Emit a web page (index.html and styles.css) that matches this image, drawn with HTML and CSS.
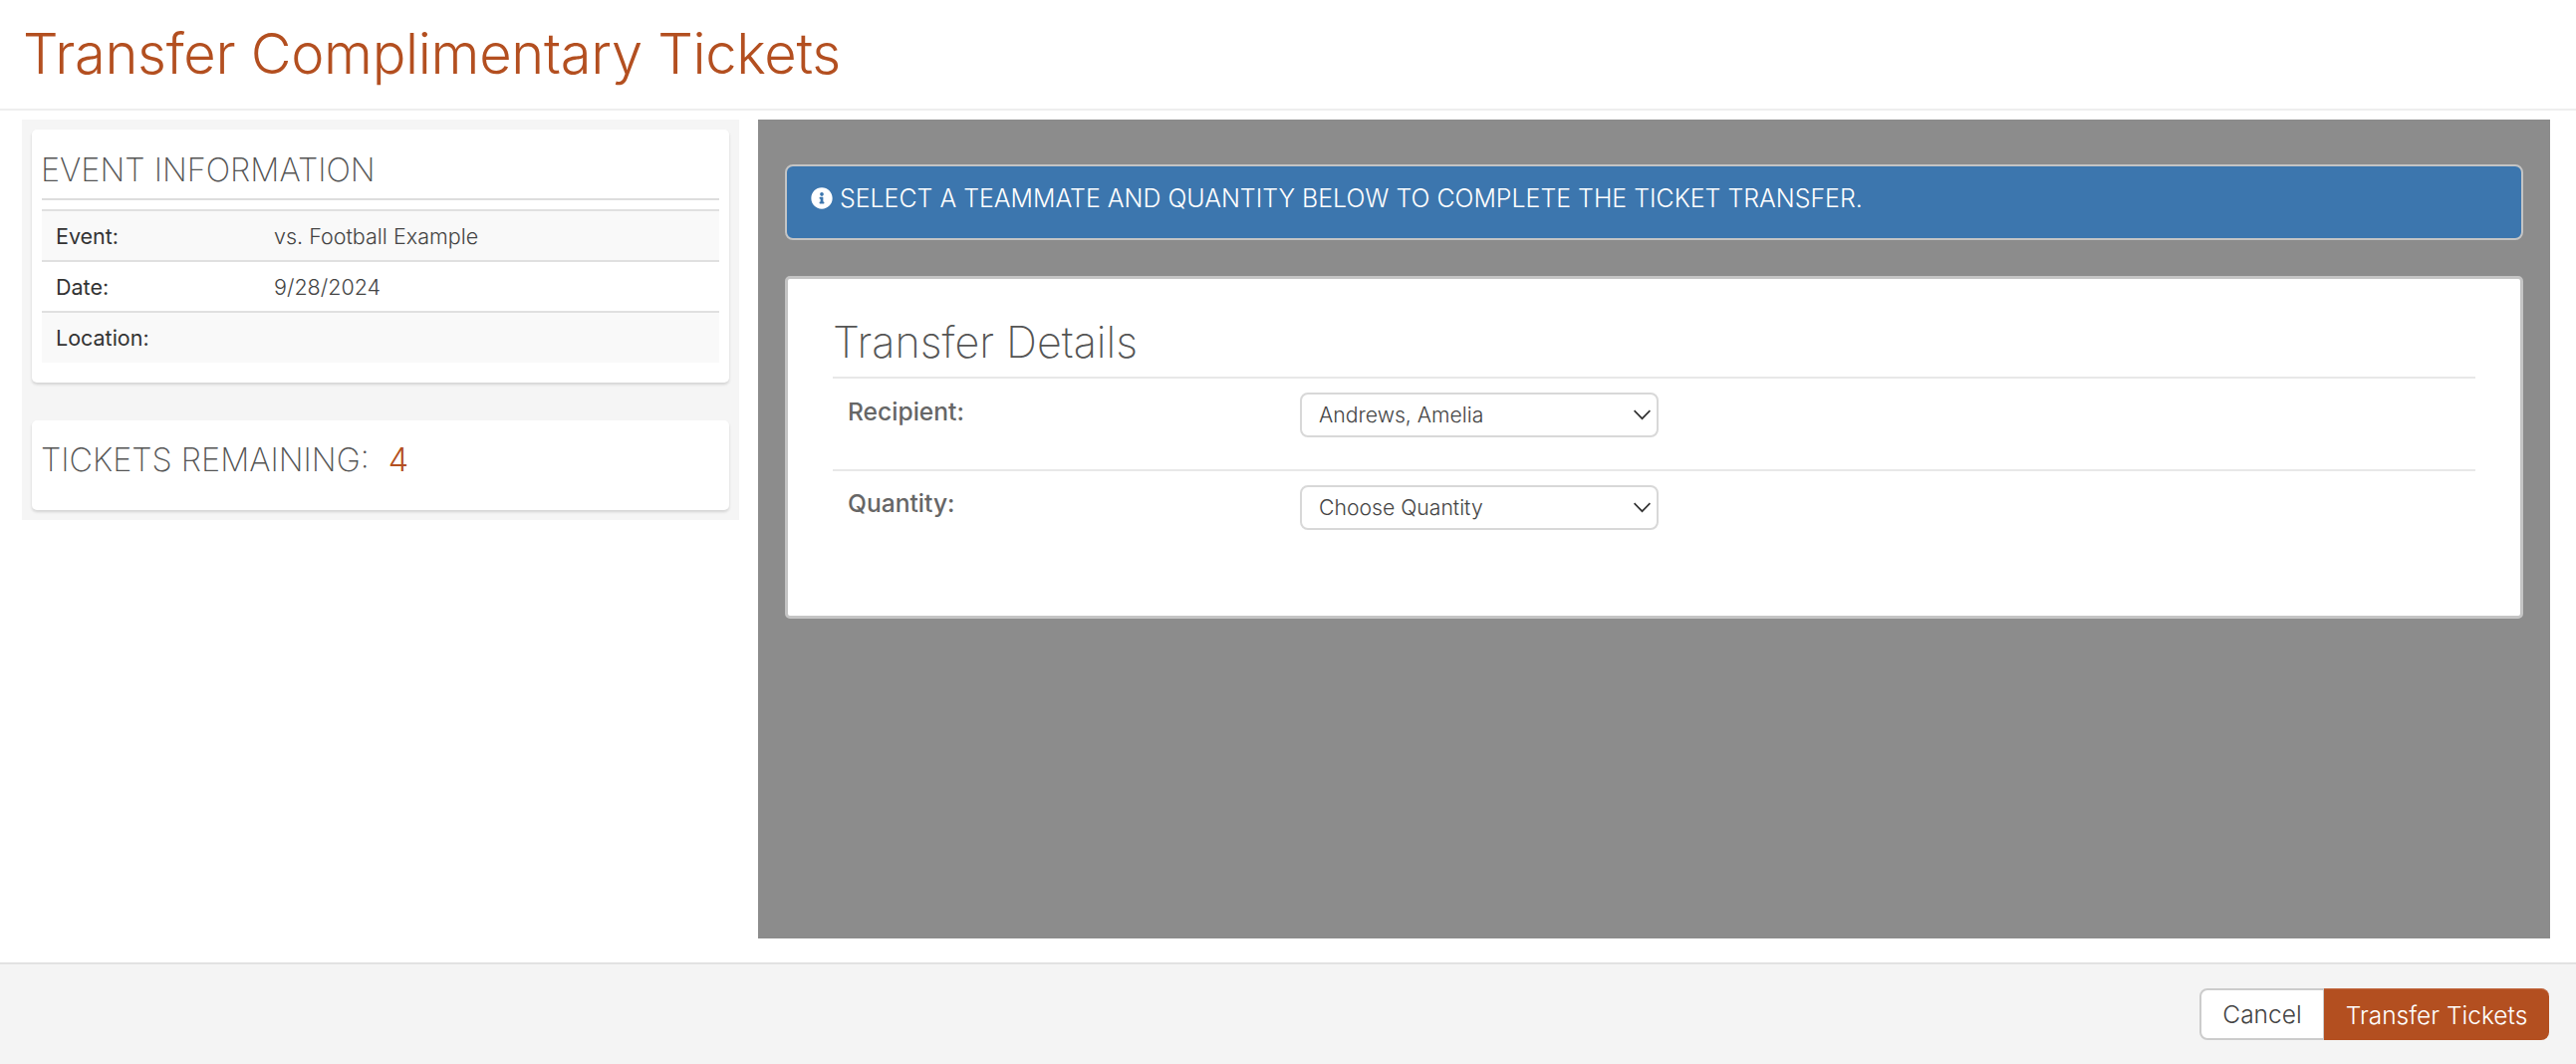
FILE: index.html
```html
<!DOCTYPE html>
<html lang="en">
<head>
<meta charset="utf-8">
<title>Transfer Complimentary Tickets</title>
<link rel="stylesheet" href="styles.css">
</head>
<body>
<div class="modal">
  <header class="modal-header"><h1>Transfer Complimentary Tickets</h1></header>
  <main class="modal-body">
    <aside class="sidebar">
      <section class="card card-event">
        <h2>Event Information</h2>
        <table class="info">
          <tr><th>Event:</th><td>vs. Football Example</td></tr>
          <tr><th>Date:</th><td>9/28/2024</td></tr>
          <tr><th>Location:</th><td></td></tr>
        </table>
      </section>
      <section class="card card-remaining">
        <h2>Tickets Remaining: <span class="count">4</span></h2>
      </section>
    </aside>
    <section class="content">
      <div class="alert">
        <svg class="alert-icon" viewBox="0 0 512 512" aria-hidden="true"><path fill="#fff" d="M256 8C119.043 8 8 119.083 8 256c0 136.997 111.043 248 248 248s248-111.003 248-248C504 119.083 392.957 8 256 8zm0 110c23.196 0 42 18.804 42 42s-18.804 42-42 42-42-18.804-42-42 18.804-42 42-42zm56 254c0 6.627-5.373 12-12 12h-88c-6.627 0-12-5.373-12-12v-24c0-6.627 5.373-12 12-12h12v-64h-12c-6.627 0-12-5.373-12-12v-24c0-6.627 5.373-12 12-12h64c6.627 0 12 5.373 12 12v100h12c6.627 0 12 5.373 12 12v24z"/></svg>
        <span>Select a teammate and quantity below to complete the ticket transfer.</span>
      </div>
      <form class="details">
        <h3>Transfer Details</h3>
        <div class="field">
          <label for="recipient">Recipient:</label>
          <select id="recipient"><option>Andrews, Amelia</option></select>
        </div>
        <div class="field">
          <label for="quantity">Quantity:</label>
          <select id="quantity"><option>Choose Quantity</option></select>
        </div>
      </form>
    </section>
  </main>
  <footer class="modal-footer">
    <div class="btn-group">
      <button type="button" class="btn btn-cancel">Cancel</button>
      <button type="button" class="btn btn-primary">Transfer Tickets</button>
    </div>
  </footer>
</div>
</body>
</html>
```
FILE: styles.css
```css
* { box-sizing: border-box; }
html, body { margin: 0; height: 100%; }
body { font-family: Inter, "Liberation Sans", sans-serif; background: #fff; color: #444; }
.modal { height: 1068px; display: flex; flex-direction: column; }

.modal-header { height: 111px; padding: 0 0 2px 23px; border-bottom: 2px solid #eee; display: flex; align-items: center; }
.modal-header h1 { margin: 0; font-size: 56px; font-weight: 300; letter-spacing: -0.3px; color: #b34f20; }

.modal-body { flex: 1; display: flex; gap: 19px; padding: 9px 26px 24px 22px; min-height: 0; }

.sidebar { width: 720px; align-self: flex-start; background: #f5f5f5; padding: 10px; display: flex; flex-direction: column; gap: 38px; }
.card { background: #fff; border-radius: 5px; box-shadow: 0 2px 3px rgba(0,0,0,.14); padding: 0 10px; }
.card h2 { margin: 0; font-size: 32.4px; font-weight: 200; text-indent: -1px; text-transform: uppercase; color: #555; line-height: 40px; }
.card-event { height: 254px; padding-top: 21px; }
.card-event h2 { border-bottom: 2px solid #ddd; height: 50px; }
.card-remaining { height: 90px; padding-top: 20px; }
.count { color: #b34f20; margin-left: 10px; font-weight: 300; }

.info { width: 100%; border-collapse: collapse; margin-top: 9px; font-size: 21.5px; }
.info tr { height: 51px; border-top: 2px solid #e0e0e0; }
.info tr:nth-child(odd) { background: #f9f9f9; }
.info th { width: 233px; text-align: left; font-weight: 400; color: #333; padding: 0 0 0 14px; }
.info td { padding: 0; color: #444; font-weight: 300; }

.content { flex: 1; background: #8c8c8c; padding: 45px 27px 0; }
.alert { height: 76px; border: 2px solid #c4c4c4; border-radius: 8px; background: #3c76ae; color: #fff; display: flex; align-items: flex-start; gap: 7px; padding: 17px 24px 0; font-size: 24.92px; font-weight: 300; text-transform: uppercase; line-height: 30px; }
.alert-icon { width: 22px; height: 22px; margin-top: 4px; flex: none; }

.details { margin-top: 36px; height: 344px; background: #fff; border: 3px solid #c4c4c4; border-radius: 5px; padding: 0 45px; }
.details h3 { margin: 0; height: 100px; padding-top: 33px; font-size: 43.1px; font-weight: 200; line-height: 60px; color: #555; border-bottom: 2px solid #e8e8e8; }
.field { display: flex; align-items: flex-start; padding: 14px 0 0 15px; height: 91px; }
.field + .field { border-top: 2px solid #e8e8e8; padding-top: 14px; }
.field label { width: 454px; margin-top: 4px; font-size: 24.6px; font-weight: 500; color: #666; line-height: 30px; }
.field + .field label { margin-top: 3px; }
.field select { appearance: none; width: 360px; height: 44.5px; border: 2px solid #d8d8d8; border-radius: 8px; background: #fff url("data:image/svg+xml,%3Csvg xmlns='http://www.w3.org/2000/svg' viewBox='0 0 17 11'%3E%3Cpath fill='none' stroke='%23333' stroke-width='1.7' d='M.6 1.2l7.9 8 7.9-8'/%3E%3C/svg%3E") no-repeat right 6px center / 17px 11px; padding: 0 17px; font: 300 21.2px Inter, sans-serif; color: #444; }

.modal-footer { height: 102px; background: #f4f4f4; border-top: 2px solid #e2e2e2; padding: 24px 27px 0 0; display: flex; justify-content: flex-end; align-items: flex-start; }
.btn-group { display: flex; height: 52px; }
.btn { font: 300 24.5px Inter, sans-serif; height: 52px; margin: 0; padding: 0; white-space: nowrap; cursor: pointer; }
.btn-cancel { background: #fff; color: #444; width: 125px; border: 2px solid #ccc; border-right: 1px solid #ccc; border-radius: 8px 0 0 8px; }
.btn-primary { background: #b34f20; color: #fff; width: 226px; border: 0; border-top: 1px solid #c4704a; border-radius: 0 8px 8px 0; }
```
